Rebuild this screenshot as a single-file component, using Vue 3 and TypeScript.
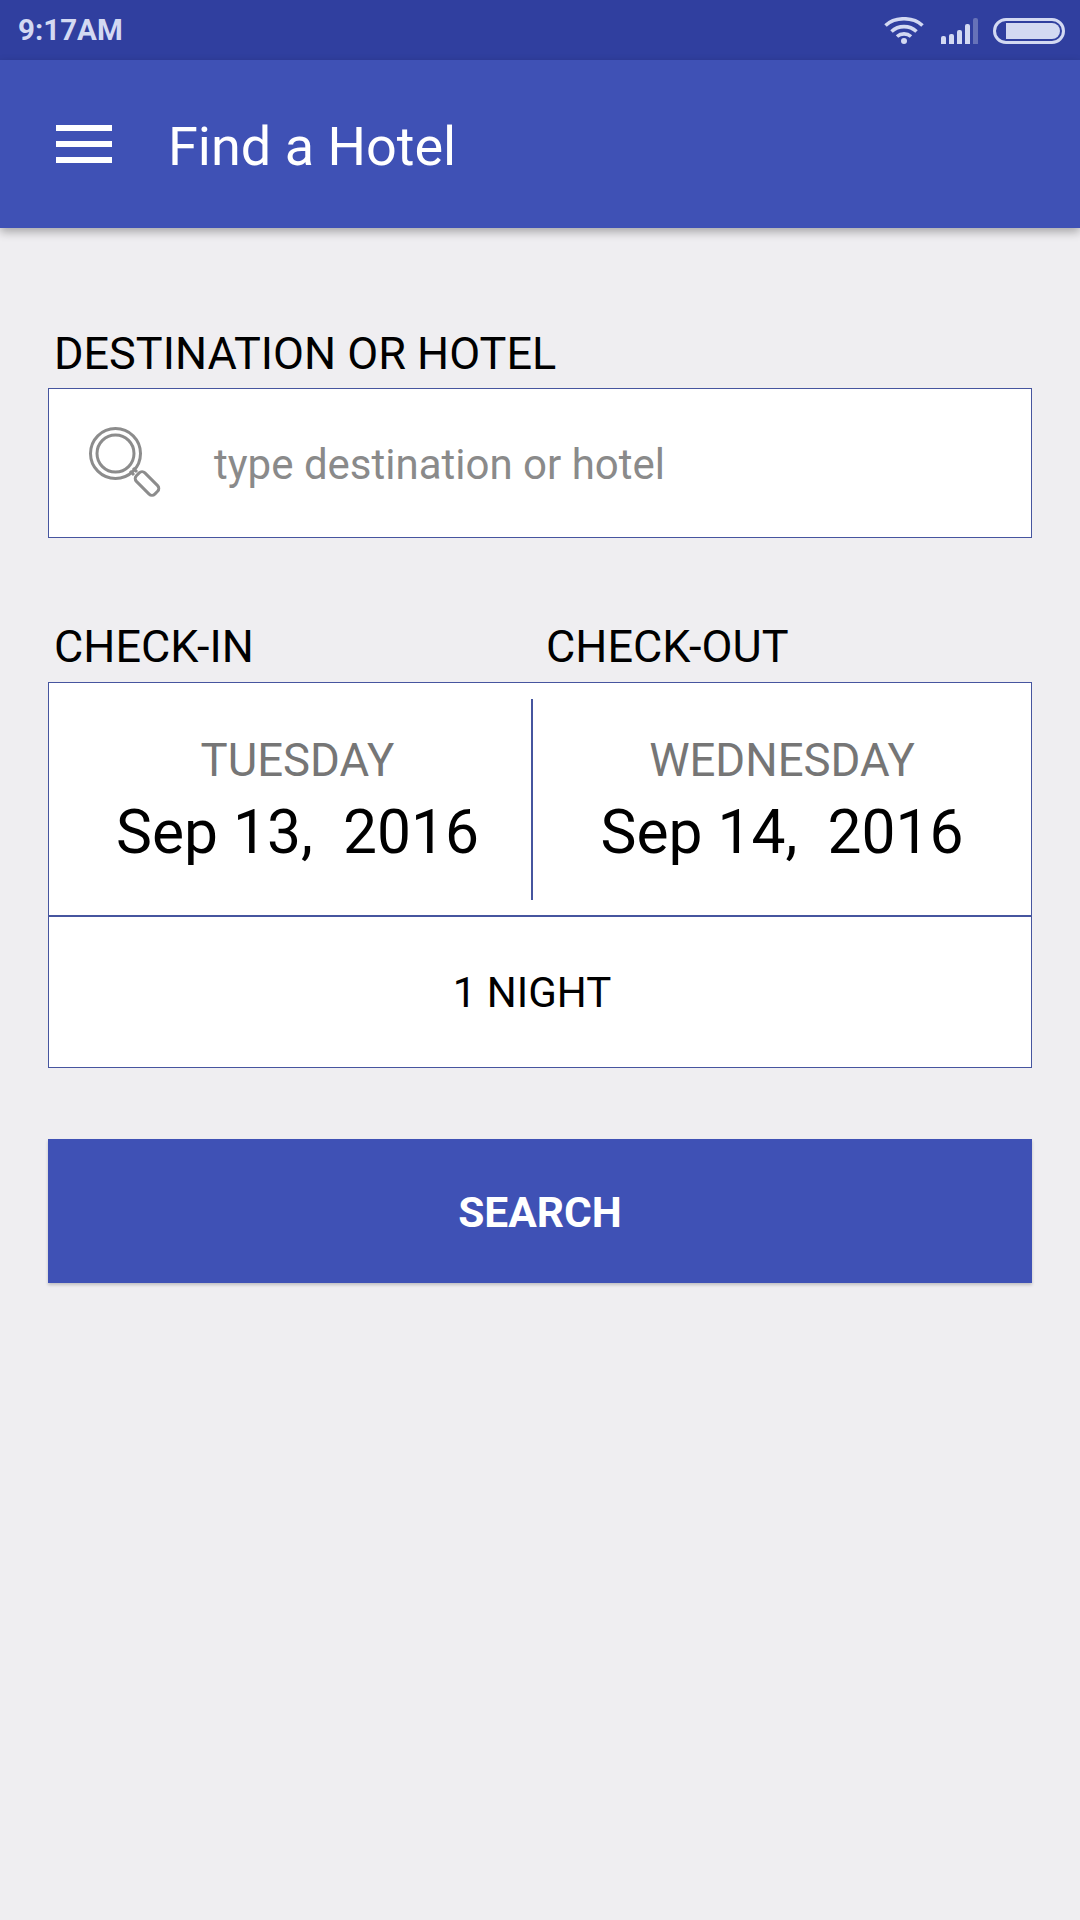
<template>
  <div class="screen">
    <div class="status-bar">
      <span class="clock">9:17AM</span>
      <div class="status-icons">
        <svg class="wifi" width="40" height="27" viewBox="0 0 40 27" fill="none" stroke="#d3d9f2" stroke-width="3.6">
          <path d="M1.5 8.5C11 -0.5 29 -0.5 38.5 8.5" />
          <path d="M7.5 14.5C14.5 8 25.5 8 32.5 14.5" />
          <path d="M13 19.5C17 16 23 16 27 19.5" />
          <circle cx="20" cy="24" r="3" fill="#d3d9f2" stroke="none" />
        </svg>
        <div class="signal">
          <i v-for="(h, n) in bars" :key="n" :class="{ dim: n === bars.length - 1 }" :style="{ height: h + 'px' }"></i>
        </div>
        <div class="battery"><div class="charge"></div></div>
      </div>
    </div>

    <header class="app-bar">
      <button class="menu" aria-label="Menu"><span></span><span></span><span></span></button>
      <h1 class="title">Find a Hotel</h1>
    </header>

    <main class="form">
      <label class="label dest-label">DESTINATION OR HOTEL</label>
      <div class="box search-box">
        <svg class="search-icon" width="72" height="72" viewBox="0 0 72 72" fill="none" stroke="#8c8c8c" stroke-width="3">
          <circle cx="26.5" cy="26.5" r="25" />
          <circle cx="26.5" cy="26.5" r="18.5" />
          <path d="M44 41L48 45M41 44L45 48" />
          <rect x="45" y="50.5" width="26" height="12" rx="4" transform="rotate(45 58 56.5)" />
        </svg>
        <span class="placeholder">type destination or hotel</span>
      </div>

      <div class="date-labels">
        <span class="label">CHECK-IN</span>
        <span class="label">CHECK-OUT</span>
      </div>
      <div class="box dates">
        <div class="date-row">
          <div class="date check-in">
            <div class="day">TUESDAY</div>
            <div class="full-date">Sep 13,&nbsp; 2016</div>
          </div>
          <div class="divider"></div>
          <div class="date check-out">
            <div class="day">WEDNESDAY</div>
            <div class="full-date">Sep 14,&nbsp; 2016</div>
          </div>
        </div>
        <div class="nights">1 NIGHT</div>
      </div>

      <button class="search-btn">SEARCH</button>
    </main>
  </div>
</template>

<script setup lang="ts">
const bars: number[] = [8, 10, 14, 20, 26];
</script>

<style>
html,
body {
  margin: 0;
  background: #efeef1;
}
</style>

<style scoped>
.screen {
  width: 1080px;
  height: 1920px;
  background: #efeef1;
  font-family: Roboto, "Liberation Sans", sans-serif;
  overflow: hidden;
}

.status-bar {
  height: 60px;
  background: #303f9f;
  display: flex;
  align-items: center;
  justify-content: space-between;
  padding: 0 15px 0 18px;
  box-sizing: border-box;
}

.clock {
  color: #d3d9f2;
  font-size: 29.5px;
  font-weight: 700;
}

.status-icons {
  display: flex;
  align-items: center;
  padding-top: 1px;
}

.wifi {
  margin-right: 17px;
}

.signal {
  display: flex;
  align-items: flex-end;
  gap: 3px;
  height: 26px;
  margin-right: 15px;
}

.signal i {
  width: 5px;
  background: #d3d9f2;
  border-radius: 2px 2px 0 0;
}

.signal i.dim {
  background: #6672b8;
}

.battery {
  width: 72px;
  height: 26px;
  border: 3px solid #d3d9f2;
  border-radius: 15px;
  padding: 2px 2px 2px 10px;
  box-sizing: border-box;
  display: flex;
}

.charge {
  flex: 1;
  background: #d3d9f2;
  border-radius: 0 9px 9px 0;
}

.app-bar {
  height: 168px;
  background: #3f51b5;
  display: flex;
  align-items: center;
  padding-left: 56px;
  box-shadow: 0 4px 9px rgba(0, 0, 0, 0.3);
  position: relative;
}

.menu {
  width: 56px;
  height: 38px;
  padding: 0;
  margin: 0 56px 0 0;
  border: none;
  background: none;
  display: flex;
  flex-direction: column;
  justify-content: space-between;
}

.menu span {
  display: block;
  height: 6px;
  background: #fff;
}

.title {
  margin: 4px 0 0;
  color: #fff;
  font-size: 54px;
  font-weight: 400;
}

.form {
  padding: 0 48px;
}

.label {
  color: #000;
  font-size: 45px;
  line-height: 50px;
}

.dest-label {
  display: block;
  margin: 101px 0 9px 6px;
}

.box {
  background: #fff;
  border: 1px solid #46559f;
  box-sizing: border-box;
}

.search-box {
  height: 150px;
  display: flex;
  align-items: center;
  padding-left: 40px;
}

.search-icon {
  flex-shrink: 0;
}

.placeholder {
  margin: 2px 0 0 53px;
  color: #8a8a8a;
  font-size: 42px;
}

.date-labels {
  display: grid;
  grid-template-columns: 492px 1fr;
  margin: 84px 0 10px;
  padding-left: 6px;
}

.dates {
  display: flex;
  flex-direction: column;
}

.date-row {
  height: 232px;
  display: flex;
  align-items: center;
  border-bottom: 2px solid #46559f;
  box-sizing: content-box;
}

.date {
  flex: none;
  box-sizing: border-box;
  text-align: center;
  padding-top: 7px;
}

.check-in {
  width: 482px;
  padding-left: 15px;
}

.check-out {
  width: 498px;
}

.divider {
  width: 2px;
  height: 201px;
  background: #46559f;
}

.day {
  color: #767676;
  font-size: 45.5px;
  line-height: 50px;
}

.full-date {
  color: #000;
  font-size: 60.5px;
  line-height: 72px;
  margin-top: 11px;
}

.nights {
  height: 150px;
  box-sizing: border-box;
  display: flex;
  align-items: center;
  justify-content: center;
  padding-right: 16px;
  font-size: 42px;
  color: #000;
}

.search-btn {
  display: block;
  width: 100%;
  height: 144px;
  margin-top: 71px;
  padding-top: 3px;
  border: none;
  background: #3f51b5;
  color: #fff;
  font-family: inherit;
  font-size: 42.5px;
  font-weight: 700;
  box-shadow: 0 2px 3px rgba(0, 0, 0, 0.2);
}
</style>
